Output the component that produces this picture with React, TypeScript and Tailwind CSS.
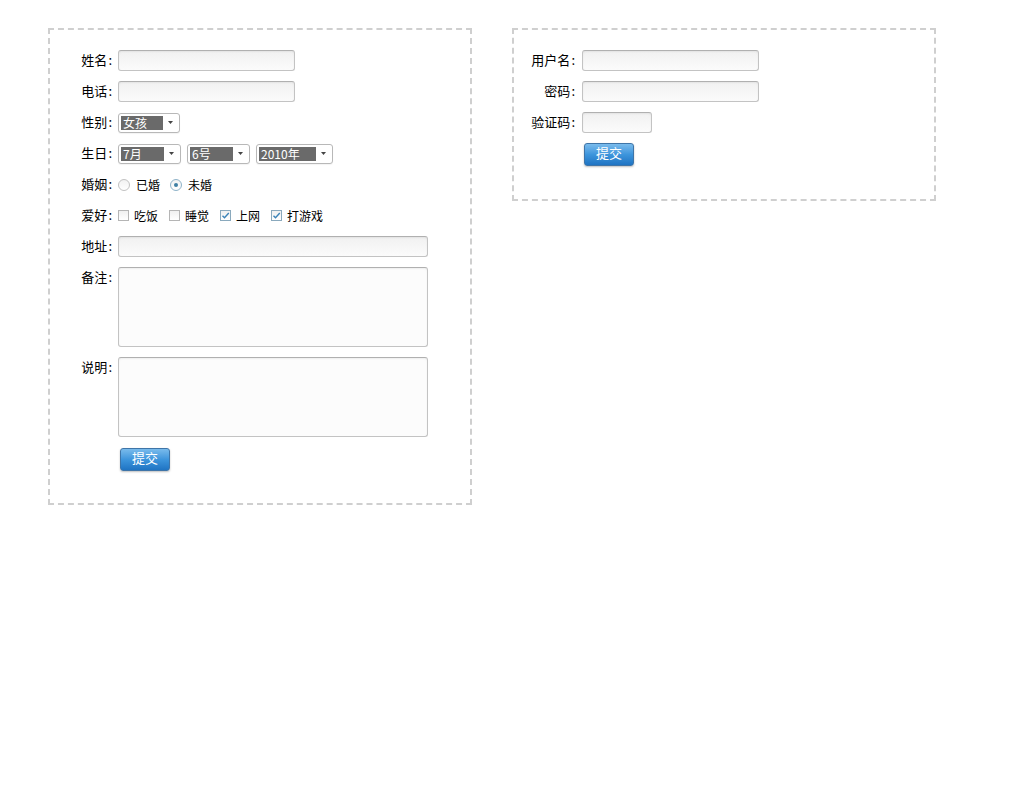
import React from 'react'

const font = { fontFamily: '"Noto Sans CJK SC", "Noto Sans", sans-serif' }

function TextBox({ w }: { w: string }) {
  return (
    <div
      className={`${w} h-[21px] rounded-[3px] border border-[#c3c3c3] border-t-[#b0b0b0] bg-gradient-to-b from-[#f1f1f1] to-[#fbfbfb] shadow-[inset_0_1px_2px_rgba(0,0,0,0.06)]`}
    />
  )
}

function Area() {
  return (
    <div className="w-[310px] h-[80px] rounded-[3px] border border-[#c3c3c3] border-t-[#b0b0b0] bg-[#fcfcfc] shadow-[inset_0_1px_2px_rgba(0,0,0,0.06)]" />
  )
}

function Select({ value, w }: { value: string; w: string }) {
  return (
    <div className={`${w} h-[20px] flex items-stretch rounded-[3px] border border-[#b8b8b8] bg-white p-[2px] shadow-[0_1px_1px_rgba(0,0,0,0.05)]`}>
      <span className="flex-1 bg-[#6a6a6a] text-white text-[12px] leading-[14px] pl-[2px]">{value}</span>
      <span className="w-[14px] flex items-center justify-center">
        <svg width="5" height="3" viewBox="0 0 5 3">
          <path d="M0 0h5L2.5 3z" fill="#444" />
        </svg>
      </span>
    </div>
  )
}

function Radio({ checked, label }: { checked?: boolean; label: string }) {
  return (
    <span className="flex items-center mr-[10px]">
      <span
        className={`w-[12px] h-[12px] rounded-full border flex items-center justify-center bg-gradient-to-b from-[#f2f2f2] to-white ${
          checked ? 'border-[#8fb3c9]' : 'border-[#c2c2c2]'
        }`}
      >
        {checked && <span className="w-[4px] h-[4px] rounded-full bg-[#3f7fa3]" />}
      </span>
      <span className="ml-[6px] text-[12px] leading-[18px]">{label}</span>
    </span>
  )
}

function Check({ checked, label }: { checked?: boolean; label: string }) {
  return (
    <span className="flex items-center mr-[11px]">
      <span
        className={`w-[11px] h-[11px] border flex items-center justify-center bg-gradient-to-b from-[#f0f0f0] to-white ${
          checked ? 'border-[#8aa9bd]' : 'border-[#b5b5b5]'
        }`}
      >
        {checked && (
          <svg width="9" height="9" viewBox="0 0 9 9">
            <path d="M1.5 4.8l2 2L7.8 2" fill="none" stroke="#3b83b8" strokeWidth="1.4" />
          </svg>
        )}
      </span>
      <span className="ml-[5px] text-[12px] leading-[18px]">{label}</span>
    </span>
  )
}

function Btn() {
  return (
    <div className="ml-[2px] w-[50px] h-[23px] rounded-[3px] border border-[#3f75a8] bg-gradient-to-b from-[#79bbec] via-[#3d95dc] to-[#1f74c3] text-white text-[13px] leading-[18px] text-center shadow-[0_1px_2px_rgba(0,0,0,0.25)]">
      提交
    </div>
  )
}

function Row({
  label,
  lw,
  gap,
  top,
  children,
}: {
  label?: string
  lw: string
  gap: string
  top?: boolean
  children: React.ReactNode
}) {
  return (
    <div className={`flex ${top ? 'items-start' : 'items-center'} mb-[10px]`}>
      <div className={`${lw} ${gap} shrink-0 text-right text-[13px] h-[21px] leading-[19px]`}>
        {label}
        <span className="ml-[1px]">:</span>
      </div>
      <div className="flex items-center min-h-[21px]">{children}</div>
    </div>
  )
}

export default function App() {
  const L = 'w-[62px]'
  const G = 'mr-[6px]'
  const RL = 'w-[61px]'
  const RG = 'mr-[7px]'
  return (
    <div className="min-h-[800px] bg-white text-black" style={font}>
      <div className="flex items-start gap-[40px] pl-[48px] pt-[28px]">
        <div className="w-[424px] h-[477px] border-2 border-dashed border-[#cfcfcf] pt-[20px]">
          <Row label="姓名" lw={L} gap={G}><TextBox w="w-[177px]" /></Row>
          <Row label="电话" lw={L} gap={G}><TextBox w="w-[177px]" /></Row>
          <Row label="性别" lw={L} gap={G}><Select value="女孩" w="w-[62px]" /></Row>
          <Row label="生日" lw={L} gap={G}>
            <div className="flex gap-[6px]">
              <Select value="7月" w="w-[63px]" />
              <Select value="6号" w="w-[63px]" />
              <Select value="2010年" w="w-[77px]" />
            </div>
          </Row>
          <Row label="婚姻" lw={L} gap={G}>
            <Radio label="已婚" />
            <Radio label="未婚" checked />
          </Row>
          <Row label="爱好" lw={L} gap={G}>
            <Check label="吃饭" />
            <Check label="睡觉" />
            <Check label="上网" checked />
            <Check label="打游戏" checked />
          </Row>
          <Row label="地址" lw={L} gap={G}><TextBox w="w-[310px]" /></Row>
          <Row label="备注" lw={L} gap={G} top><Area /></Row>
          <Row label="说明" lw={L} gap={G} top><Area /></Row>
          <div className="flex pt-[1px]">
            <div className={`${L} ${G}`} />
            <Btn />
          </div>
        </div>

        <div className="w-[424px] h-[173px] border-2 border-dashed border-[#cfcfcf] pt-[20px]">
          <Row label="用户名" lw={RL} gap={RG}><TextBox w="w-[177px]" /></Row>
          <Row label="密码" lw={RL} gap={RG}><TextBox w="w-[177px]" /></Row>
          <Row label="验证码" lw={RL} gap={RG}><TextBox w="w-[70px]" /></Row>
          <div className="flex">
            <div className={`${RL} ${RG}`} />
            <Btn />
          </div>
        </div>
      </div>
    </div>
  )
}
